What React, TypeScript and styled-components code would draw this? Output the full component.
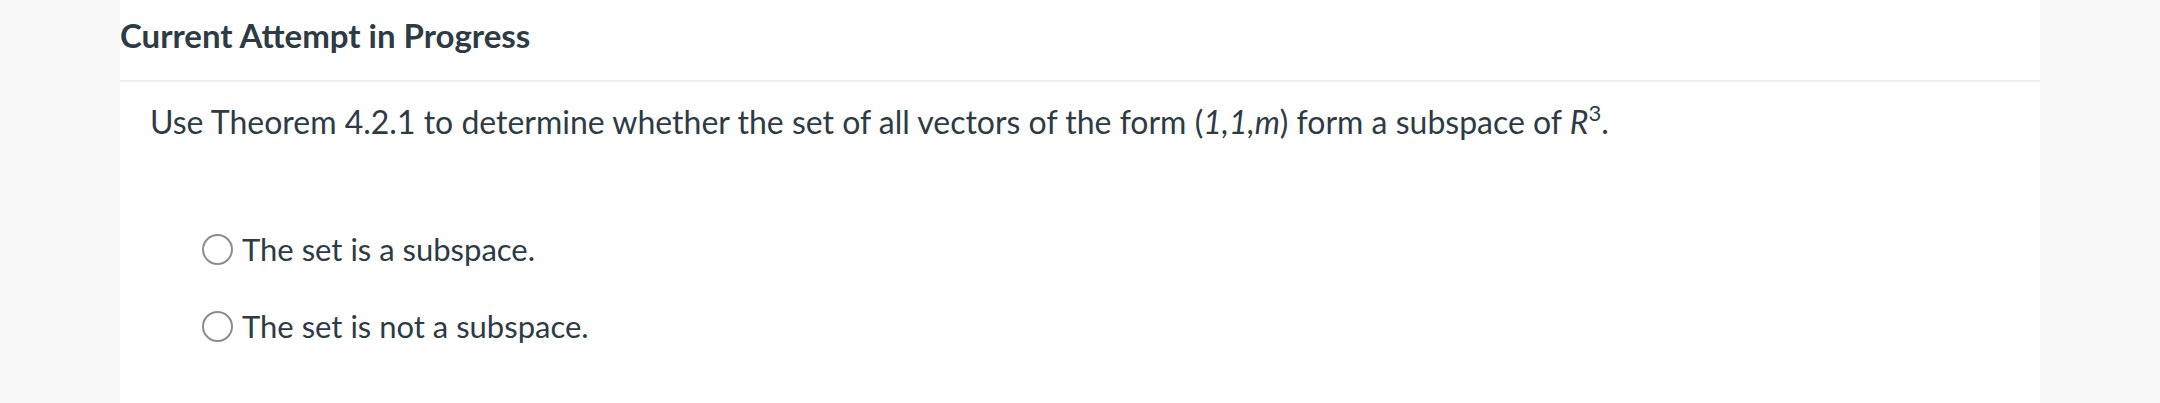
import styled, { createGlobalStyle } from 'styled-components';

const GlobalStyle = createGlobalStyle`
    html, body {
        margin: 0;
        padding: 0;
        background-color: #f8f8f8;
        font-family: Lato, "Noto Sans", sans-serif;
        color: #2d3b45;
    }
`;

const Page = styled.div`
    padding: 0 120px;
`;

const Card = styled.section`
    background-color: #fff;
    min-height: 403px;
`;

const Header = styled.header`
    padding: 15px 0 25px;
    border-bottom: 2px solid #eeeeee;
`;

const Title = styled.h2`
    margin: 0;
    font-size: 33px;
    font-weight: 700;
    line-height: 40px;
`;

const Question = styled.p`
    margin: 21px 0 0;
    padding-left: 30px;
    font-size: 32px;
    line-height: 38px;

    sup {
        font-size: 22px;
        line-height: 0;
        vertical-align: 13px;
    }
`;

const Options = styled.div`
    display: flex;
    flex-direction: column;
    gap: 39px;
    margin-top: 89px;
    padding-left: 82px;
`;

const Option = styled.label`
    display: flex;
    align-items: center;
    gap: 9px;
    font-size: 31px;
    line-height: 38px;
    cursor: pointer;
`;

const Radio = styled.span`
    box-sizing: border-box;
    width: 31px;
    height: 31px;
    border: 2px solid #8c8c8c;
    border-radius: 50%;
    flex-shrink: 0;
`;

const answers = ['The set is a subspace.', 'The set is not a subspace.'];

export default function App() {
    return (
        <>
            <GlobalStyle />
            <Page>
                <Card>
                    <Header>
                        <Title>Current Attempt in Progress</Title>
                    </Header>
                    <Question>
                        Use Theorem 4.2.1 to determine whether the set of all vectors of the form (<i>1,1,m</i>) form a subspace of <i>R</i><sup>3</sup>.
                    </Question>
                    <Options>
                        {answers.map((answer) => (
                            <Option key={answer}>
                                <Radio />
                                <span>{answer}</span>
                            </Option>
                        ))}
                    </Options>
                </Card>
            </Page>
        </>
    );
}
